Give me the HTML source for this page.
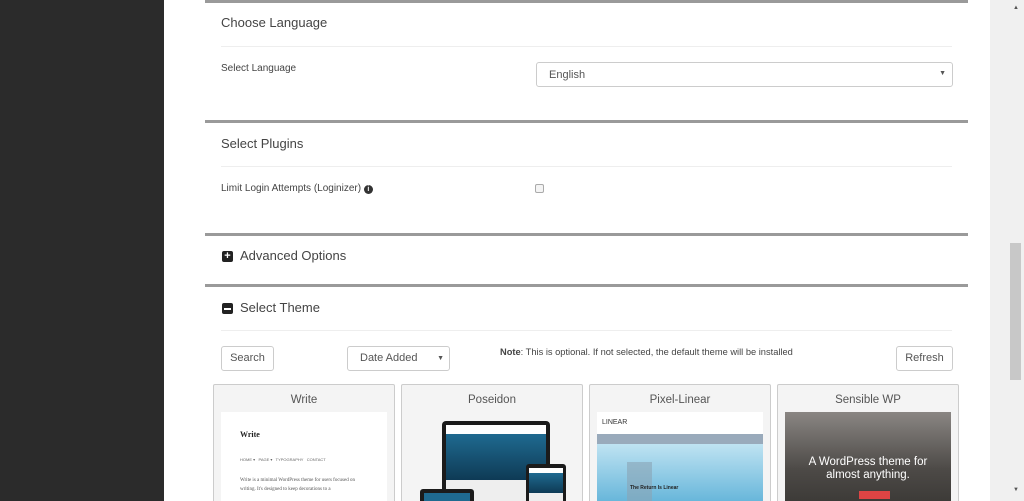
<!DOCTYPE html>
<html style="overflow:hidden;width:1024px;height:501px"><head><style>
*{margin:0;padding:0;box-sizing:border-box}
html,body{overflow:hidden}
body{width:1024px;height:501px;background:#fff;font-family:"Liberation Sans",sans-serif;position:relative;color:#333}
.a{position:absolute}
.hl{position:absolute;left:205px;width:763px;height:3px;background:#9a9a9a}
.dv{position:absolute;left:221px;width:731px;height:1px;background:#eee}
.h{position:absolute;left:221px;font-size:13px;color:#444}
.s{position:absolute;font-size:10px;color:#444}
.btn{position:absolute;border:1px solid #ccc;border-radius:3px;background:#fff;font-size:11px;color:#555;text-align:center}
.card{position:absolute;top:384px;width:182px;height:120px;background:#f4f4f4;border:1px solid #ccc;border-radius:2px;overflow:hidden}
.card .t{text-align:center;font-size:11.5px;color:#555;margin-top:9px}
.card .im{position:absolute;left:7px;top:27px;width:166px;height:95px;overflow:hidden}
</style></head><body>
<div class="a" style="left:0;top:0;width:164px;height:501px;background:#2b2b2b"></div>
<div class="a" style="left:990px;top:0;width:34px;height:501px;background:#f0f0f0"></div>
<div class="a" style="left:1010px;top:243px;width:11px;height:137px;background:#c8c8c8"></div>
<div class="a" style="left:1013px;top:5px;font-size:6px;color:#555">▲</div>
<div class="a" style="left:1013px;top:487px;font-size:6px;color:#555">▼</div>

<div class="hl" style="top:0"></div>
<div class="h" style="top:15px">Choose Language</div>
<div class="dv" style="top:46px"></div>
<div class="s" style="left:221px;top:63px">Select Language</div>
<div class="a" style="left:536px;top:62px;width:417px;height:25px;border:1px solid #ccc;border-radius:3px;font-size:11px;color:#555;padding:6px 12px">English<span style="position:absolute;right:6px;top:7px;font-size:7px">▼</span></div>

<div class="hl" style="top:120px"></div>
<div class="h" style="top:136px">Select Plugins</div>
<div class="dv" style="top:166px"></div>
<div class="s" style="left:221px;top:183px">Limit Login Attempts (Loginizer) <span style="display:inline-block;width:9px;height:9px;border-radius:50%;background:#333;color:#fff;font-size:7px;text-align:center;line-height:9px;font-weight:bold">i</span></div>
<div class="a" style="left:535px;top:184px;width:9px;height:9px;border:1px solid #aaa;border-radius:2px;background:#f4f4f4"></div>

<div class="hl" style="top:233px"></div>
<div class="a" style="left:222px;top:251px;width:11px;height:11px;background:#222;border-radius:2px;color:#fff;font-size:11px;font-weight:bold;line-height:11px;text-align:center">+</div>
<div class="h" style="left:240px;top:248px">Advanced Options</div>

<div class="hl" style="top:284px"></div>
<div class="a" style="left:222px;top:303px;width:11px;height:11px;background:#222;border-radius:2px"><div style="position:absolute;left:2px;top:5px;width:7px;height:2px;background:#fff"></div></div>
<div class="h" style="left:240px;top:300px">Select Theme</div>
<div class="dv" style="top:330px"></div>

<div class="btn" style="left:221px;top:346px;width:53px;height:25px;line-height:23px">Search</div>
<div class="btn" style="left:347px;top:346px;width:103px;height:25px;line-height:23px;text-align:left;padding-left:12px">Date Added<span style="position:absolute;right:5px;font-size:7px">▼</span></div>
<div class="a" style="left:500px;top:347px;font-size:9.3px;color:#444"><b>Note</b>: This is optional. If not selected, the default theme will be installed</div>
<div class="btn" style="left:896px;top:346px;width:57px;height:25px;line-height:23px">Refresh</div>

<div class="card" style="left:213px"><div class="t">Write</div>
<div class="im" style="background:#fff"><div style="position:absolute;left:19px;top:18px;font-family:'Liberation Serif',serif;font-size:8px;font-weight:bold;color:#222">Write</div>
<div style="position:absolute;left:19px;top:45px;font-size:4px;color:#666">HOME ▾ &nbsp; PAGE ▾ &nbsp; TYPOGRAPHY &nbsp; CONTACT</div>
<div style="position:absolute;left:19px;top:64px;width:130px;font-family:'Liberation Serif',serif;font-size:5px;color:#555;line-height:9px">Write is a minimal WordPress theme for users focused on writing. It's designed to keep decorations to a</div></div></div>
<div class="card" style="left:401px"><div class="t">Poseidon</div>
<div class="a" style="left:40px;top:36px;width:108px;height:90px;background:#1b1b1b;border-radius:4px"><div style="position:absolute;left:4px;top:4px;width:100px;height:80px;background:linear-gradient(#fff 0 9px,#1f6a90 9px,#0e3a55 55px,#eee 55px)"></div></div>
<div class="a" style="left:124px;top:79px;width:40px;height:50px;background:#1b1b1b;border-radius:3px"><div style="position:absolute;left:3px;top:4px;width:34px;height:40px;background:linear-gradient(#fff 0 5px,#1f6a90 5px,#0e3a55 25px,#eee 25px)"></div></div>
<div class="a" style="left:18px;top:104px;width:54px;height:20px;background:#1b1b1b;border-radius:3px"><div style="position:absolute;left:4px;top:4px;width:46px;height:16px;background:#1f6a90"></div></div></div>
<div class="card" style="left:589px"><div class="t">Pixel-Linear</div>
<div class="im" style="background:linear-gradient(#fff 0 22px,#9ab 22px 32px,#bfe3f2 32px,#5fb2d8)"><div style="position:absolute;left:5px;top:7px;font-size:7px;color:#333">LINEAR</div>
<div style="position:absolute;left:30px;top:50px;width:25px;height:45px;background:#8aa4b4;opacity:.6"></div><div style="position:absolute;left:33px;top:73px;font-size:5px;font-weight:bold;color:#222">The Return Is Linear</div></div></div>
<div class="card" style="left:777px"><div class="t">Sensible WP</div>
<div class="im" style="background:linear-gradient(#8a8683,#4d4a47 60%,#3a3835);color:#fff;text-align:center"><div style="position:absolute;left:0;width:166px;top:44px;font-size:11.5px;line-height:13px">A WordPress theme for<br>almost anything.</div><div style="position:absolute;left:74px;top:79px;width:31px;height:8px;background:#d44"></div></div></div>
</body></html>
